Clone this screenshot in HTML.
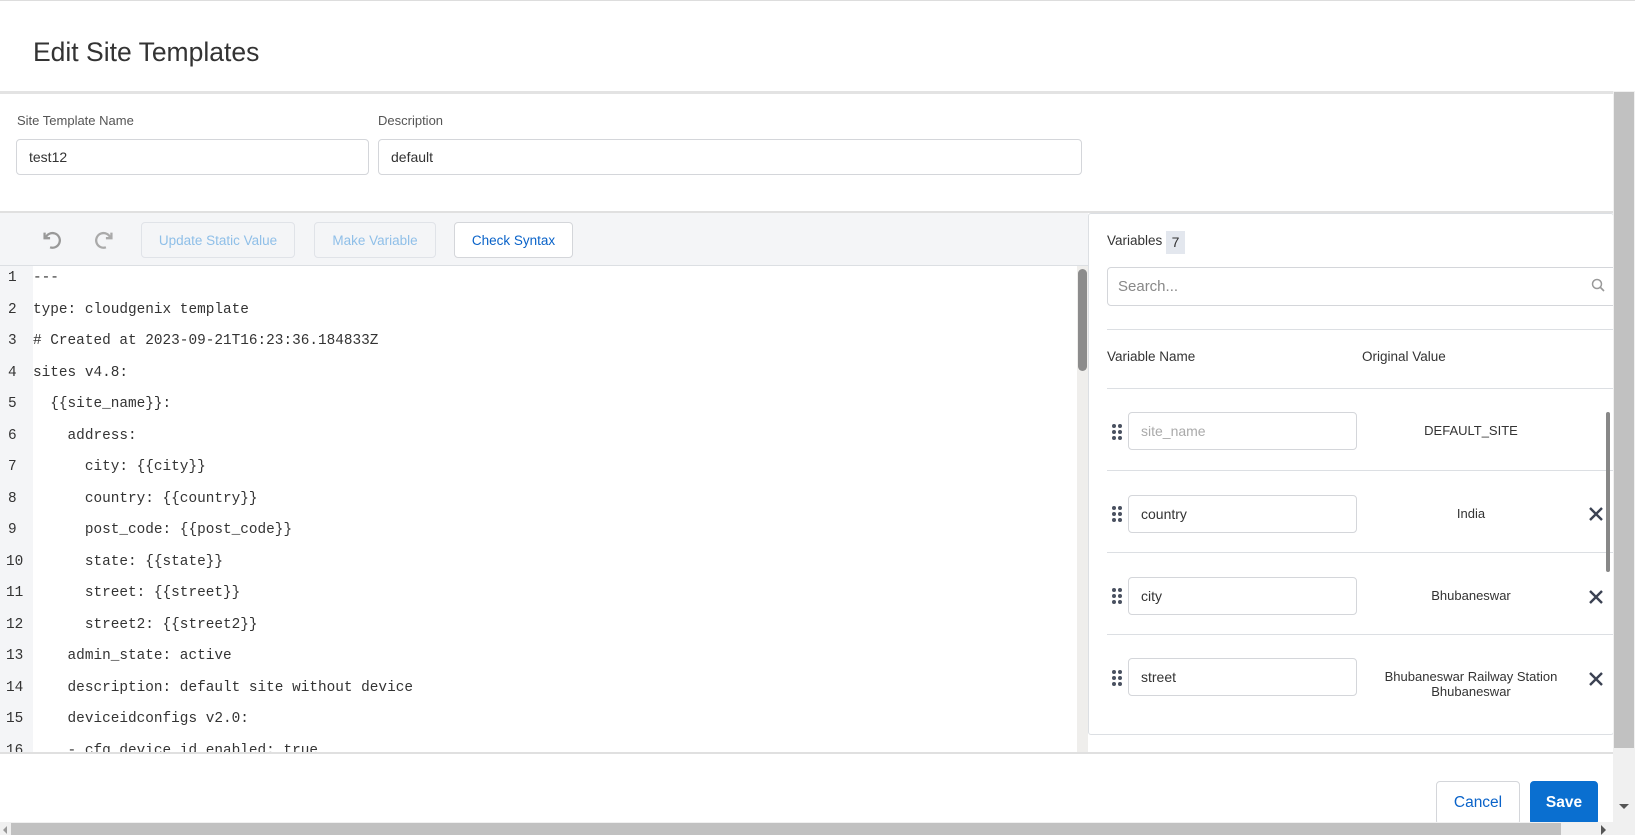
<!DOCTYPE html>
<html><head><meta charset="utf-8"><style>
*{box-sizing:border-box;margin:0;padding:0}
body{width:1635px;height:835px;overflow:hidden;background:#fff;font-family:"Liberation Sans",sans-serif;position:relative;color:#333}
.abs{position:absolute}
.inp{position:absolute;border:1px solid #d4d6da;border-radius:4px;background:#fff;font-size:14px;color:#333;padding-left:12px;display:flex;align-items:center}
.lbl{position:absolute;font-size:13px;color:#555}
.btn{position:absolute;border:1px solid #e0e3e8;border-radius:4px;font-size:13.5px;display:flex;align-items:center;justify-content:center}
.code{position:absolute;left:0;top:266px;width:1077px;height:486px;overflow:hidden;font-family:"Liberation Mono",monospace;font-size:14.4px;color:#333}
.ln{position:absolute;left:0;width:33px;height:486px;background:#f4f5f7}
.row{position:absolute;left:0;height:31.5px;line-height:31.5px;white-space:pre}
.row b{font-weight:normal;display:inline-block;width:33px;padding-left:8px;color:#333;overflow:visible;white-space:nowrap}
.sep{position:absolute;left:1107px;width:506px;height:1px;background:#dcdfe3}
.drag{position:absolute;width:9px;height:16px}
.drag i{position:absolute;width:4px;height:4px;border-radius:50%;background:#4a5160}
.vin{position:absolute;left:1128px;width:229px;height:38px}
.ov{position:absolute;left:1360px;width:222px;text-align:center;font-size:13px;color:#333;line-height:15px}
.x{position:absolute;left:1588px}
</style></head><body>
<div class="abs" style="left:0;top:0;width:1635px;height:1px;background:#ddd"></div>
<div class="abs" style="left:33px;top:37px;font-size:26.5px;color:#333">Edit Site Templates</div>
<div class="abs" style="left:0;top:91px;width:1613px;height:3px;background:#e3e3e3"></div>

<div class="lbl" style="left:17px;top:113px">Site Template Name</div>
<div class="lbl" style="left:378px;top:113px">Description</div>
<div class="inp" style="left:16px;top:139px;width:353px;height:36px">test12</div>
<div class="inp" style="left:378px;top:139px;width:704px;height:36px">default</div>

<div class="abs" style="left:0;top:211px;width:1613px;height:2px;background:#e0e0e0"></div>
<div class="abs" style="left:0;top:213px;width:1088px;height:53px;background:#f4f5f7;border-bottom:1px solid #dcdfe3"></div>
<svg class="abs" style="left:40px;top:229px" width="22" height="22" viewBox="0 0 24 24"><path d="M5 4v6h6" fill="none" stroke="#999" stroke-width="2.5"/><path d="M6 10a8 8 0 1 1 5 10" fill="none" stroke="#999" stroke-width="2.5"/></svg>
<svg class="abs" style="left:94px;top:229px" width="22" height="22" viewBox="0 0 24 24"><path d="M19 4v6h-6" fill="none" stroke="#aaa" stroke-width="2.5"/><path d="M18 10a8 8 0 1 0 -5 10" fill="none" stroke="#aaa" stroke-width="2.5"/></svg>
<div class="btn" style="left:141px;top:222px;width:154px;height:36px;color:#8fbfe8;background:#f4f5f7">Update Static Value</div>
<div class="btn" style="left:314px;top:222px;width:122px;height:36px;color:#8fbfe8;background:#f4f5f7">Make Variable</div>
<div class="btn" style="left:454px;top:222px;width:119px;height:36px;color:#0a63c9;background:#fff;border-color:#d4d6da">Check Syntax</div>

<div class="code"><div class="ln"></div>
<div class="row" style="top:-3px"><b>1</b>---</div>
<div class="row" style="top:28.5px"><b>2</b>type: cloudgenix template</div>
<div class="row" style="top:60px"><b>3</b># Created at 2023-09-21T16:23:36.184833Z</div>
<div class="row" style="top:91.5px"><b>4</b>sites v4.8:</div>
<div class="row" style="top:123px"><b>5</b>  {{site_name}}:</div>
<div class="row" style="top:154.5px"><b>6</b>    address:</div>
<div class="row" style="top:186px"><b>7</b>      city: {{city}}</div>
<div class="row" style="top:217.5px"><b>8</b>      country: {{country}}</div>
<div class="row" style="top:249px"><b>9</b>      post_code: {{post_code}}</div>
<div class="row" style="top:280.5px"><b style="padding-left:6px">10</b>      state: {{state}}</div>
<div class="row" style="top:312px"><b style="padding-left:6px">11</b>      street: {{street}}</div>
<div class="row" style="top:343.5px"><b style="padding-left:6px">12</b>      street2: {{street2}}</div>
<div class="row" style="top:375px"><b style="padding-left:6px">13</b>    admin_state: active</div>
<div class="row" style="top:406.5px"><b style="padding-left:6px">14</b>    description: default site without device</div>
<div class="row" style="top:438px"><b style="padding-left:6px">15</b>    deviceidconfigs v2.0:</div>
<div class="row" style="top:469.5px"><b style="padding-left:6px">16</b>    - cfg_device_id_enabled: true</div>
</div>
<div class="abs" style="left:1077px;top:266px;width:11px;height:487px;background:#efeeec"></div>
<div class="abs" style="left:1078px;top:269px;width:9px;height:102px;background:#8c8c8c;border-radius:5px"></div>
<div class="abs" style="left:0;top:752px;width:1613px;height:2px;background:#e0e0e0"></div>

<div class="abs" style="left:1088px;top:213px;width:526px;height:522px;border:1px solid #dcdfe3;border-radius:3px;background:#fff"></div>
<div class="abs" style="left:1107px;top:233px;font-size:13.5px;color:#333">Variables</div>
<div class="abs" style="left:1166px;top:231px;width:19px;height:23px;background:#e3e7ee;font-size:14px;text-align:center;line-height:23px">7</div>
<div class="inp" style="left:1107px;top:267px;width:510px;height:39px;font-size:15px;color:#888;padding-left:10px">Search...</div>
<svg class="abs" style="left:1591px;top:278px" width="14" height="14" viewBox="0 0 14 14"><circle cx="6" cy="6" r="4.5" fill="none" stroke="#999" stroke-width="1.5"/><path d="M9.5 9.5L13 13" stroke="#999" stroke-width="1.6"/></svg>
<div class="sep" style="top:329px"></div>
<div class="abs" style="left:1107px;top:349px;font-size:13.5px">Variable Name</div>
<div class="abs" style="left:1362px;top:349px;font-size:13.5px">Original Value</div>
<div class="sep" style="top:388px"></div>

<div class="drag" style="left:1112px;top:424px"><i style="left:0;top:0"></i><i style="left:6px;top:0"></i><i style="left:0;top:6px"></i><i style="left:6px;top:6px"></i><i style="left:0;top:12px"></i><i style="left:6px;top:12px"></i></div>
<div class="inp vin" style="top:412px;color:#aaa">site_name</div>
<div class="ov" style="top:423px">DEFAULT_SITE</div>
<div class="sep" style="top:470px"></div>

<div class="drag" style="left:1112px;top:506px"><i style="left:0;top:0"></i><i style="left:6px;top:0"></i><i style="left:0;top:6px"></i><i style="left:6px;top:6px"></i><i style="left:0;top:12px"></i><i style="left:6px;top:12px"></i></div>
<div class="inp vin" style="top:495px">country</div>
<div class="ov" style="top:506px">India</div>
<svg class="x" style="top:506px" width="16" height="16" viewBox="0 0 16 16"><path d="M2 2L14 14M14 2L2 14" stroke="#3b4252" stroke-width="2.4"/></svg>
<div class="sep" style="top:552px"></div>

<div class="drag" style="left:1112px;top:588px"><i style="left:0;top:0"></i><i style="left:6px;top:0"></i><i style="left:0;top:6px"></i><i style="left:6px;top:6px"></i><i style="left:0;top:12px"></i><i style="left:6px;top:12px"></i></div>
<div class="inp vin" style="top:577px">city</div>
<div class="ov" style="top:588px">Bhubaneswar</div>
<svg class="x" style="top:589px" width="16" height="16" viewBox="0 0 16 16"><path d="M2 2L14 14M14 2L2 14" stroke="#3b4252" stroke-width="2.4"/></svg>
<div class="sep" style="top:634px"></div>

<div class="drag" style="left:1112px;top:670px"><i style="left:0;top:0"></i><i style="left:6px;top:0"></i><i style="left:0;top:6px"></i><i style="left:6px;top:6px"></i><i style="left:0;top:12px"></i><i style="left:6px;top:12px"></i></div>
<div class="inp vin" style="top:658px">street</div>
<div class="ov" style="top:669px">Bhubaneswar Railway Station<br>Bhubaneswar</div>
<svg class="x" style="top:671px" width="16" height="16" viewBox="0 0 16 16"><path d="M2 2L14 14M14 2L2 14" stroke="#3b4252" stroke-width="2.4"/></svg>
<div class="abs" style="left:1606px;top:412px;width:4px;height:160px;background:#888;border-radius:2px"></div>

<div class="btn" style="left:1436px;top:781px;width:84px;height:44px;color:#0a63c9;background:#fff;border-color:#d4d6da;font-size:15.5px">Cancel</div>
<div class="btn" style="left:1530px;top:781px;width:68px;height:44px;color:#fff;background:#0a6fd0;border-color:#0a6fd0;font-size:15.5px;font-weight:bold">Save</div>

<div class="abs" style="left:1613px;top:91px;width:22px;height:744px;background:#f0f0f0"></div>
<div class="abs" style="left:1614px;top:92px;width:20px;height:656px;background:#c1c1c1"></div>
<div class="abs" style="left:1619px;top:804px;border-left:5px solid transparent;border-right:5px solid transparent;border-top:5px solid #555"></div>
<div class="abs" style="left:0;top:822px;width:1613px;height:13px;background:#f0f0f0"></div>
<div class="abs" style="left:11px;top:823px;width:1550px;height:12px;background:#c1c1c1"></div>
<div class="abs" style="left:3px;top:826px;border-top:4px solid transparent;border-bottom:4px solid transparent;border-right:4px solid #999"></div>
<div class="abs" style="left:1601px;top:825px;border-top:5px solid transparent;border-bottom:5px solid transparent;border-left:5px solid #555"></div>
</body></html>
